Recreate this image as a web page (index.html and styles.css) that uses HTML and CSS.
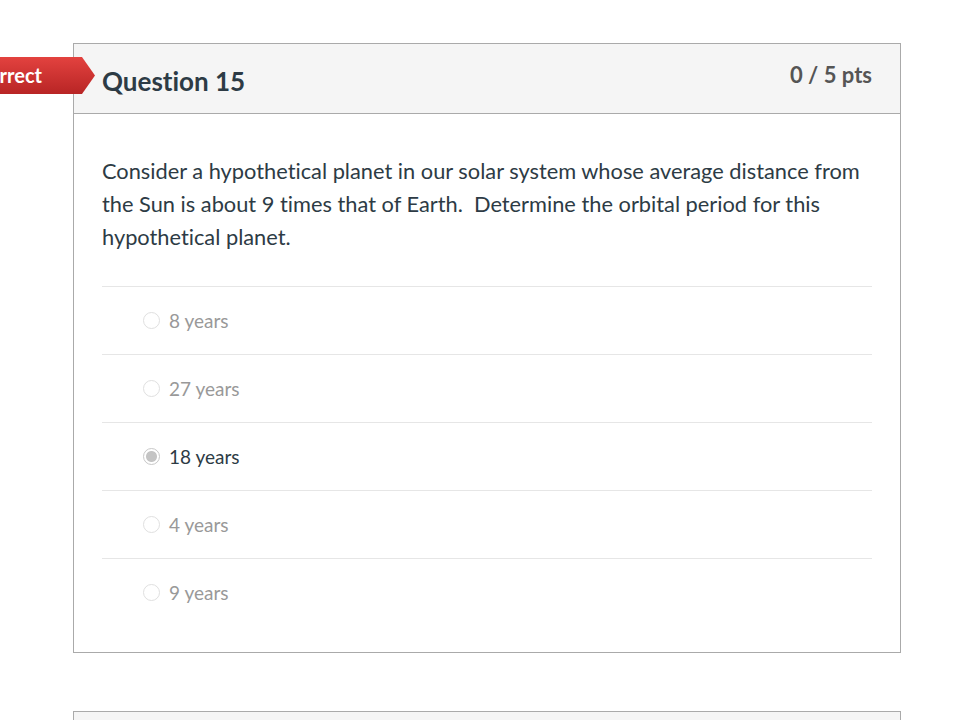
FILE: index.html
```html
<!DOCTYPE html>
<html>
<head>
    <meta charset="UTF-8">
    <title>Quiz Results</title>
    <link rel="stylesheet" href="styles.css">
</head>
<body>

<div class="quiz">
    <div class="question">
        <div class="result-banner">Incorrect</div>
        <div class="question-header">
            <h2 class="question-title">Question 15</h2>
            <div class="points">0 / 5 pts</div>
        </div>
        <div class="question-body">
            <p class="question-text">Consider a hypothetical planet in our solar system whose average distance from the Sun is about 9 times that of Earth.&nbsp; Determine the orbital period for this hypothetical planet.</p>
            <div class="answers">
                <div class="answer">
                    <span class="radio"></span>
                    <span class="answer-label">8 years</span>
                </div>
                <div class="answer">
                    <span class="radio"></span>
                    <span class="answer-label">27 years</span>
                </div>
                <div class="answer selected">
                    <span class="radio"></span>
                    <span class="answer-label">18 years</span>
                </div>
                <div class="answer">
                    <span class="radio"></span>
                    <span class="answer-label">4 years</span>
                </div>
                <div class="answer">
                    <span class="radio"></span>
                    <span class="answer-label">9 years</span>
                </div>
            </div>
        </div>
    </div>

    <div class="question">
        <div class="question-header"></div>
    </div>
</div>

</body>
</html>
```

FILE: styles.css
```css
body {
    margin: 0;
    font-family: Lato, "Open Sans", sans-serif;
    font-variant-ligatures: none;
    background-color: #fff;
    color: #2d3b45;
    overflow: hidden;
}
.quiz {
    padding-top: 43px;
    padding-left: 73px;
    width: 828px;
}
.question {
    position: relative;
    border: 1px solid #aaa;
    margin-bottom: 58px;
}
.result-banner {
    position: absolute;
    top: 13px;
    left: -179px;
    width: 200px;
    height: 37px;
    padding-right: 53px;
    line-height: 37px;
    text-align: right;
    box-sizing: border-box;
    color: #fff;
    font-weight: bold;
    font-size: 20px;
    background: linear-gradient(#e3423f, #b82525);
    clip-path: polygon(0 0, 187px 0, 200px 50%, 187px 100%, 0 100%);
    z-index: 2;
}
.question-header {
    display: flex;
    justify-content: space-between;
    align-items: flex-start;
    height: 69px;
    padding: 0 28px;
    background-color: #f5f5f5;
    border-bottom: 1px solid #aaa;
}
.question-title {
    margin: 0;
    padding-top: 21px;
    font-size: 26px;
    font-weight: bold;
    color: #2d3b45;
}
.points {
    padding-top: 17px;
    font-size: 22px;
    font-weight: bold;
    color: #555;
}
.question-body {
    padding: 40px 28px 26px;
}
.question-text {
    margin: 0 0 33px;
    font-size: 21.8px;
    line-height: 33px;
}
.answer {
    display: flex;
    align-items: center;
    height: 67px;
    padding-left: 41px;
    border-top: 1px solid #e6e6e6;
    font-size: 19px;
    color: #999;
}
.answer.selected {
    color: #2d3b45;
}
.radio {
    width: 15px;
    height: 15px;
    margin-right: 9px;
    border: 1px solid #e0e0e0;
    border-radius: 50%;
    background-color: #fff;
    box-sizing: content-box;
}
.answer.selected .radio {
    border-color: #c8c8c8;
    background: radial-gradient(circle, #c4c4c4 0, #c4c4c4 5px, #fff 6px);
}
```
